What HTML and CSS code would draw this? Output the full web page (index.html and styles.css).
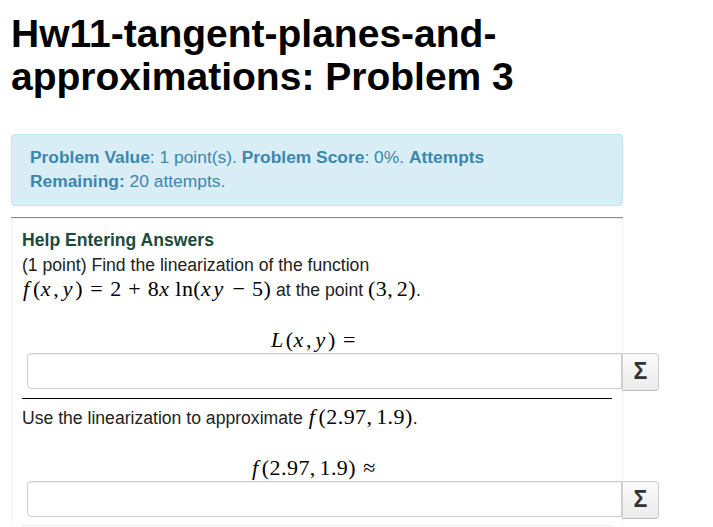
FILE: index.html
```html
<!DOCTYPE html>
<html lang="en">
<head>
<meta charset="utf-8">
<title>Hw11-tangent-planes-and-approximations: Problem 3</title>
<link rel="stylesheet" href="styles.css">
</head>
<body>
<div class="page">
  <h1 class="title">Hw11-tangent-planes-and-<br>approximations: Problem 3</h1>
  <div class="info"><b>Problem Value</b>: 1 point(s). <b>Problem Score</b>: 0%. <b>Attempts</b><br><b>Remaining:</b> 20 attempts.</div>
  <hr class="sep">
  <div class="problem">
    <div class="help">Help Entering Answers</div>
    <p class="text">(1 point) Find the linearization of the function<br><span class="m"><i class="v f">f</i>(<i class="v">x</i>,<span class="thin"></span><i class="v">y</i>)<span class="rel">=</span>2<span class="bin">+</span>8<i class="v">x</i><span class="thin"></span>ln(<i class="v">x</i><i class="v">y</i><span class="bin">−</span>5)</span> at the point <span class="m">(3,<span class="thin"></span>2)</span>.</p>
    <div class="display"><i class="v">L</i>(<i class="v">x</i>,<span class="thin"></span><i class="v">y</i>)<span class="rel">=</span></div>
    <div class="answer"><div class="field"></div><div class="sigma">Σ</div></div>
    <hr class="rule">
    <p class="text after">Use the linearization to approximate <span class="m"><i class="v f">f</i>(2.97,<span class="thin"></span>1.9)</span>.</p>
    <div class="display"><i class="v f">f</i>(2.97,<span class="thin"></span>1.9)<span class="rel">≈</span></div>
    <div class="answer"><div class="field"></div><div class="sigma">Σ</div></div>
    <hr class="rule light">
  </div>
</div>
</body>
</html>
```

FILE: styles.css
```css
html, body {
  margin: 0;
  padding: 0;
  background: #fff;
}

.page {
  width: 612px;
  margin-left: 11px;
  font-family: "Liberation Sans", Arial, sans-serif;
  color: #222;
}

.title {
  margin: 12px 0 36px;
  font-size: 39px;
  line-height: 43px;
  font-weight: bold;
  color: #000;
}

.info {
  background: #d9edf7;
  border: 1px solid #bce8f1;
  border-radius: 4px;
  padding: 10px 18px 11px;
  color: #3a87ad;
  font-size: 17.4px;
  line-height: 24.4px;
}

.info b {
  font-weight: bold;
}

.sep {
  margin: 11px 0 0;
  height: 0;
  border: 0;
  border-top: 1px solid #8a8a8a;
  border-bottom: 1px solid #ececec;
}

.problem {
  border-left: 1px solid #f3f3f3;
  border-right: 1px solid #f3f3f3;
  padding: 9px 10px 0;
  font-size: 17.6px;
  line-height: 25px;
}

.help {
  font-weight: bold;
  color: #1b4b3c;
}

.text {
  margin: 0;
}

.text.after {
  margin-top: 7px;
}

.m,
.display {
  font-family: "Liberation Serif", "Times New Roman", serif;
  font-size: 22px;
  letter-spacing: 0.02em;
  color: #000;
}

.m {
  line-height: 1;
}

.v {
  font-style: italic;
  padding-right: 0.1em;
}

.v.f {
  padding-left: 0.05em;
  padding-right: 0.15em;
}

.thin {
  display: inline-block;
  width: 0.167em;
}

.rel {
  margin: 0 0.33em;
}

.bin {
  margin: 0 0.3em;
}

.display {
  text-align: center;
  margin-top: 24px;
  line-height: 25px;
}

.answer {
  display: flex;
  align-items: flex-start;
  width: 632px;
  margin: 1px 0 0 5px;
}

.field {
  flex: 1;
  height: 36px;
  box-sizing: border-box;
  border: 1px solid #cccccc;
  border-radius: 4px 0 0 4px;
  background: #fff;
  box-shadow: inset 0 1px 1px rgba(0, 0, 0, 0.06);
}

.sigma {
  width: 37px;
  height: 38px;
  box-sizing: border-box;
  border: 1px solid #cccccc;
  border-left: 1px solid #d4d4d4;
  border-bottom-color: #b8b8b8;
  border-radius: 0 4px 4px 0;
  background: linear-gradient(#fbfbfb, #ebebeb);
  display: flex;
  align-items: center;
  justify-content: center;
  font-family: "Liberation Sans", Arial, sans-serif;
  font-weight: bold;
  font-size: 23px;
  line-height: 1;
  color: #333;
}

.rule {
  height: 0;
  margin: 7px 0 0;
  border: 0;
  border-top: 1px solid #000;
}

.rule.light {
  margin-top: 6px;
  border-top-color: #ececec;
}
```
